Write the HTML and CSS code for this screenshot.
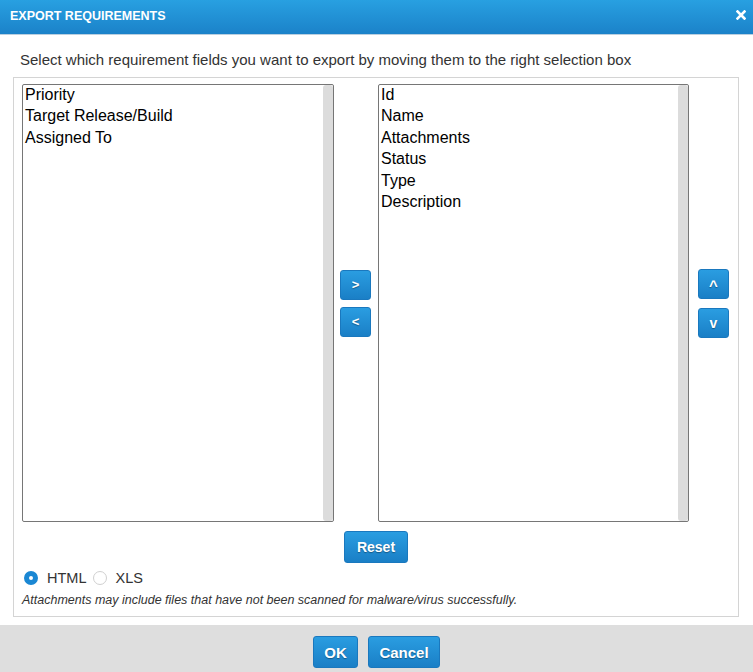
FILE: index.html
```html
<!DOCTYPE html>
<html>
<head>
<meta charset="utf-8">
<link rel="stylesheet" href="styles.css">
</head>
<body>
<div class="dialog">
  <div class="header">
    <span class="title">EXPORT REQUIREMENTS</span>
    <svg class="close" width="10" height="10" viewBox="0 0 10 10"><path d="M1.5 1.5L8.5 8.5M8.5 1.5L1.5 8.5" stroke="#fff" stroke-width="2.6" stroke-linecap="square"/></svg>
  </div>
  <p class="intro">Select which requirement fields you want to export by moving them to the right selection box</p>
  <div class="panel">
    <div class="lists">
      <div class="listbox">
        <div class="items">
          <div>Priority</div>
          <div>Target Release/Build</div>
          <div>Assigned To</div>
        </div>
        <div class="scroll"></div>
      </div>
      <div class="btncol">
        <button class="btn sq">&gt;</button>
        <button class="btn sq">&lt;</button>
      </div>
      <div class="listbox right">
        <div class="items">
          <div>Id</div>
          <div>Name</div>
          <div>Attachments</div>
          <div>Status</div>
          <div>Type</div>
          <div>Description</div>
        </div>
        <div class="scroll"></div>
      </div>
      <div class="btncol updown">
        <button class="btn sq up">^</button>
        <button class="btn sq v">v</button>
      </div>
    </div>
    <div class="resetrow"><button class="btn reset">Reset</button></div>
    <div class="radios">
      <span class="radio on"></span><span class="rlabel">HTML</span>
      <span class="radio"></span><span class="rlabel">XLS</span>
    </div>
    <p class="note">Attachments may include files that have not been scanned for malware/virus successfully.</p>
  </div>
  <div class="footer">
    <button class="btn ok">OK</button>
    <button class="btn cancel">Cancel</button>
  </div>
</div>
</body>
</html>
```
FILE: styles.css
```css
html, body {
  margin: 0;
  padding: 0;
  background: #fff;
}
body {
  font-family: "Liberation Sans", Arial, sans-serif;
  width: 753px;
  height: 672px;
  overflow: hidden;
}
.dialog {
  display: flex;
  flex-direction: column;
  height: 672px;
}
.header {
  height: 35px;
  box-sizing: border-box;
  display: flex;
  align-items: center;
  justify-content: space-between;
  padding: 0 7px 2px 10px;
  background: linear-gradient(#28a0e1, #1b82c9);
  border-bottom: 1px solid #b9cfe0;
  color: #fff;
}
.title {
  font-weight: bold;
  font-size: 12.5px;
}
.close {
  display: block;
  margin-top: -3px;
}
.intro {
  margin: 16px 0 0 20px;
  font-size: 15px;
  color: #333;
  line-height: 18px;
  height: 18px;
}
.panel {
  margin: 8px 14px 0 13px;
  border: 1px solid #d4d4d4;
  padding: 6px 8px 9px 8px;
}
.lists {
  display: flex;
  align-items: center;
}
.listbox {
  width: 312px;
  height: 438px;
  box-sizing: border-box;
  border: 1px solid #767676;
  border-radius: 2px;
  display: flex;
  background: #fff;
}
.listbox.right {
  width: 311px;
}
.items {
  flex: 1;
  padding: 0 2px;
  margin-top: -1px;
  font-size: 16px;
  line-height: 21.4px;
  color: #000;
}
.scroll {
  width: 10px;
  background: #dcdcdc;
  border-radius: 3px;
}
.btncol {
  display: flex;
  flex-direction: column;
  gap: 7px;
  margin: 0 7px 0 6px;
}
.btncol.updown {
  margin: 0 0 0 9px;
  gap: 9px;
}
.btn {
  font-family: "Liberation Sans", Arial, sans-serif;
  font-weight: bold;
  color: #fff;
  background: linear-gradient(#2a9de1, #1a7fc6);
  border: 1px solid #1a78be;
  border-radius: 3px;
  text-shadow: 0 1px 1px rgba(0,0,0,0.35);
  padding: 0;
  cursor: pointer;
}
.sq {
  width: 31px;
  height: 30px;
  font-size: 13px;
}
.sq.up {
  font-size: 15px;
  padding-top: 4px;
}
.sq.v {
  font-size: 14px;
}
.resetrow {
  display: flex;
  justify-content: center;
  margin-top: 9px;
}
.reset {
  width: 64px;
  height: 32px;
  font-size: 14px;
}
.radios {
  display: flex;
  align-items: center;
  margin-top: 6px;
  height: 17px;
  font-size: 14.5px;
  color: #333;
}
.radio {
  width: 14px;
  height: 14px;
  box-sizing: border-box;
  border-radius: 50%;
  border: 1px solid #d0d0d0;
  background: #fff;
  margin: 0 8px 0 1px;
}
.radio.on {
  border: 5px solid #1a87d3;
  background: #fff;
  margin: 0 9px 0 2px;
}
.rlabel {
  margin-right: 6px;
}
.note {
  margin: 7px 0 0 0;
  font-size: 12.5px;
  font-style: italic;
  color: #333;
  line-height: 14px;
}
.footer {
  margin-top: 8px;
  flex: 1;
  background: #dedede;
  display: flex;
  justify-content: center;
  align-items: flex-start;
  gap: 10px;
  padding-top: 11px;
}
.ok {
  width: 45px;
  height: 32px;
  font-size: 15px;
}
.cancel {
  width: 72px;
  height: 32px;
  font-size: 15px;
}
```
